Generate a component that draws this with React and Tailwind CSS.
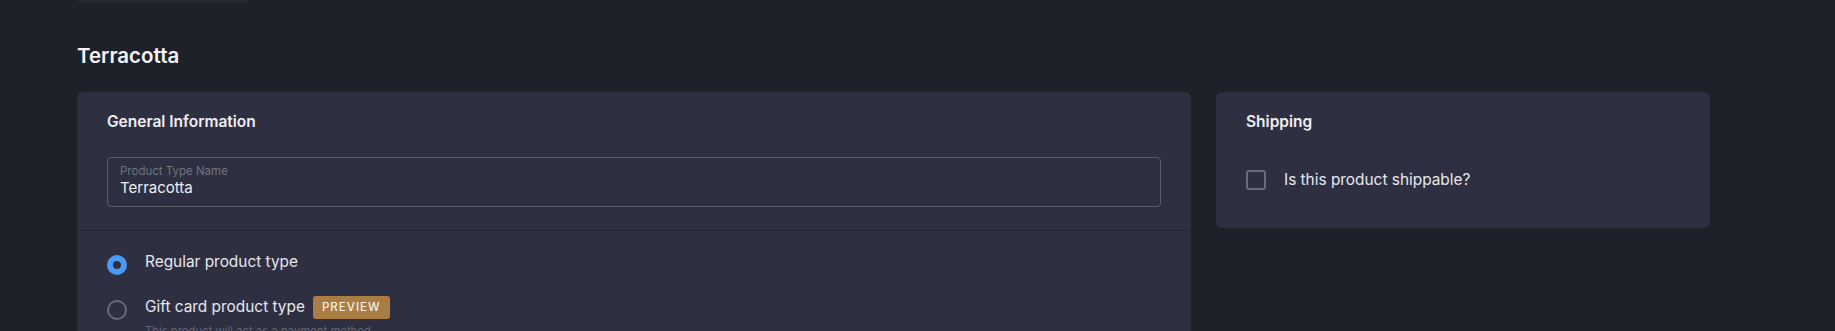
import React, { useState } from 'react';

const RadioOption = ({ checked, onSelect, label, badge, hint }) => (
  <label className="flex cursor-pointer items-start gap-[18px]" onClick={onSelect}>
    <span
      className={`mt-[5px] flex h-5 w-5 shrink-0 items-center justify-center rounded-full ${
        checked ? 'bg-[#4a9af5]' : 'border-2 border-[#676a78]'
      }`}
    >
      {checked && <span className="h-2 w-2 rounded-full bg-[#2e3042]" />}
    </span>
    <span className="flex flex-col">
      <span className="flex items-center gap-2 text-[15.4px] leading-6 text-[#e6e7ec]">
        {label}
        {badge && (
          <span className="rounded-[3px] bg-[#a97d44] px-[9px] py-[3px] text-[11.5px] font-medium leading-[17px] tracking-[0.09em] text-[#f6efe4]">
            {badge}
          </span>
        )}
      </span>
      {hint && <span className="mt-[4px] text-[11.3px] leading-4 text-[#5f6273]">{hint}</span>}
    </span>
  </label>
);

export default function App() {
  const [kind, setKind] = useState('regular');
  const [name, setName] = useState('Terracotta');
  const [shippable, setShippable] = useState(false);

  return (
    <div className="min-h-[331px] overflow-hidden bg-[#1f212a] pl-[77px] font-['Inter',sans-serif]">
      {/* scrolled-off element above */}
      <div className="h-[2px] w-[170px] rounded-b bg-[#272a35]" />

      <h1 className="mt-[40px] text-[20.5px] font-semibold leading-7 text-[#f4f4f6]">Terracotta</h1>

      <div className="mt-[22px] flex items-start gap-[25px]">
        {/* General Information */}
        <div className="w-[1114px] rounded-md bg-[#2e3042]">
          <div className="px-[30px] pb-[23px] pt-[20px]">
            <h2 className="text-[15.5px] font-semibold leading-5 text-[#eeeef1]">General Information</h2>
            <div className="mt-[25px] h-[50px] rounded border border-[#5a5c6a] px-3 pt-[6px]">
              <div className="text-[11.5px] leading-[14px] text-[#71737f]">Product Type Name</div>
              <input
                value={name}
                onChange={(e) => setName(e.target.value)}
                className="block h-[19px] w-full bg-transparent text-[15px] leading-[19px] text-[#eceef2] outline-none"
              />
            </div>
          </div>
          <div className="h-px bg-[#22242e]" />
          <div className="flex flex-col gap-[20px] px-[30px] pt-[19px]">
            <RadioOption
              checked={kind === 'regular'}
              onSelect={() => setKind('regular')}
              label="Regular product type"
            />
            <RadioOption
              checked={kind === 'gift'}
              onSelect={() => setKind('gift')}
              label="Gift card product type"
              badge="PREVIEW"
              hint="This product will act as a payment method"
            />
          </div>
        </div>

        {/* Shipping */}
        <div className="h-[136px] w-[494px] rounded-md bg-[#2e3042] px-[30px] pt-[20px]">
          <h2 className="text-[15.5px] font-semibold leading-5 text-[#eeeef1]">Shipping</h2>
          <label className="mt-[36px] flex cursor-pointer items-center gap-[18px]">
            <span
              onClick={() => setShippable(!shippable)}
              className={`h-5 w-5 rounded-[3px] border-2 ${
                shippable ? 'border-[#4a9af5] bg-[#4a9af5]' : 'border-[#676a78]'
              }`}
            />
            <span className="text-[15.4px] leading-6 text-[#e6e7ec]">Is this product shippable?</span>
          </label>
        </div>
      </div>
    </div>
  );
}
